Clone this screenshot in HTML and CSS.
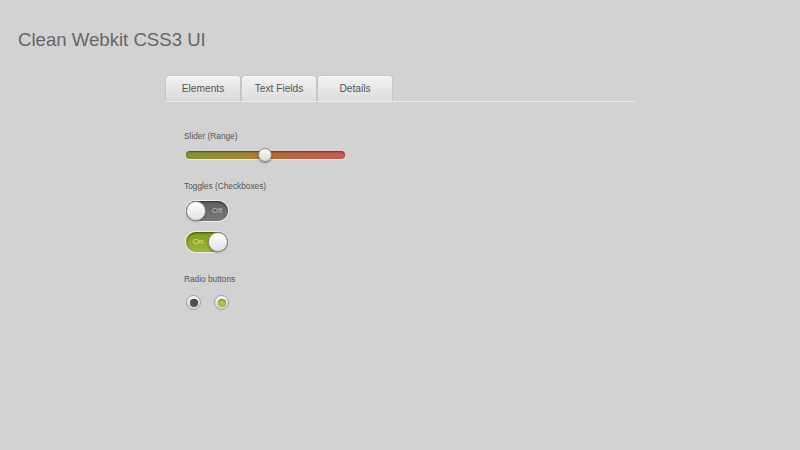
FILE: index.html
```html
<!DOCTYPE html>
<html>
<head>
<meta charset="utf-8">
<link rel="stylesheet" href="styles.css">
</head>
<body>
<h1 class="title">Clean Webkit CSS3 UI</h1>
<div class="panel">
  <div class="tabs">
    <div class="tab active">Elements</div>
    <div class="tab">Text Fields</div>
    <div class="tab">Details</div>
  </div>
  <div class="content">
    <div class="label">Slider (Range)</div>
    <div class="slider">
      <div class="track"></div>
      <div class="thumb"></div>
    </div>
    <div class="label l2">Toggles (Checkboxes)</div>
    <div class="toggle off"><span class="knob"></span><span class="txt">Off</span></div>
    <div class="toggle on"><span class="txt">On</span><span class="knob"></span></div>
    <div class="label l3">Radio buttons</div>
    <div class="radios">
      <span class="radio dark"></span>
      <span class="radio green"></span>
    </div>
  </div>
</div>
</body>
</html>
```
FILE: styles.css
```css
html, body { margin: 0; padding: 0; }
body {
  background: #d2d2d2;
  font-family: "Liberation Sans", Arial, sans-serif;
  width: 800px; height: 450px; overflow: hidden;
}
.title {
  margin: 0;
  padding: 29px 0 0 18px;
  font-size: 18.6px;
  font-weight: normal;
  color: #666;
  line-height: 22px;
}
.panel {
  margin: 24px 0 0 165px;
  width: 470px;
}
.tabs {
  display: flex;
  height: 26px;
  border-bottom: 1px solid #e9e9e9;
}
.tab {
  width: 74px;
  height: 25px;
  border: 1px solid #c6c6c6;
  border-bottom: none;
  border-radius: 4px 4px 0 0;
  background: linear-gradient(#f2f2f2, #dddddd);
  color: #555;
  font-size: 10.2px;
  text-align: center;
  line-height: 25px;
  box-shadow: inset 0 1px 0 #fafafa;
}
.tab.active {
  background: linear-gradient(#f3f3f3, #d9d9d9);
}
.content {
  padding: 28px 0 0 19px;
}
.label {
  font-size: 8.3px;
  color: #555;
  line-height: 12px;
}
.slider {
  position: relative;
  width: 159px;
  height: 16px;
  margin: 5px 0 0 2px;
}
.track {
  position: absolute;
  left: 0; right: 0; top: 4px;
  height: 8px;
  border-radius: 5px;
  background: linear-gradient(90deg, #849830 0%, #a08a30 35%, #b46a38 55%, #d05a50 100%);
  box-shadow: inset 0 1px 2px rgba(0,0,0,0.5), 0 1px 0 rgba(255,255,255,0.5);
}
.thumb {
  position: absolute;
  left: 72px; top: 1px;
  width: 14px; height: 14px;
  border-radius: 50%;
  background: linear-gradient(#fafafa, #d8d8d8);
  border: 1px solid #8a8a8a;
  box-sizing: border-box;
  box-shadow: 0 1px 2px rgba(0,0,0,0.4);
}
.l2 { margin-top: 17px; }
.toggle {
  display: flex;
  align-items: center;
  width: 42px;
  height: 20px;
  border-radius: 10px;
  box-sizing: border-box;
  margin-left: 2px;
  font-size: 8px;
  box-shadow: 0 0 0 1px rgba(255,255,255,0.6), inset 0 1px 2px rgba(0,0,0,0.5);
}
.toggle.off {
  margin-top: 9px;
  background: linear-gradient(#5f5f5f, #7a7a7a);
  color: #bbb;
}
.toggle.on {
  margin-top: 11px;
  background: linear-gradient(#7c9c1c, #9ab83a);
  color: #d8e6a8;
}
.knob {
  width: 20px; height: 20px;
  border-radius: 50%;
  box-sizing: border-box;
  background: linear-gradient(#ffffff, #e2e2e2);
  border: 1px solid #8a8a8a;
  box-shadow: 0 1px 2px rgba(0,0,0,0.35);
  flex: none;
}
.toggle .txt { flex: 1; text-align: center; line-height: 20px; }
.toggle.on .txt { padding-left: 2px; }
.l3 { margin-top: 21px; }
.radios {
  display: flex;
  gap: 13px;
  margin: 10px 0 0 2px;
}
.radio {
  width: 15px; height: 15px;
  border-radius: 50%;
  box-sizing: border-box;
  background: linear-gradient(#f4f4f4, #d0d0d0);
  border: 1px solid #a0a0a0;
  display: flex; align-items: center; justify-content: center;
}
.radio::after {
  content: "";
  width: 8px; height: 8px;
  border-radius: 50%;
}
.radio.dark::after { background: radial-gradient(#4a4a4a, #5e5e5e); box-shadow: inset 0 1px 1px rgba(0,0,0,0.5); }
.radio.green::after { background: radial-gradient(#b6d04a, #8fb028); box-shadow: inset 0 1px 1px rgba(0,0,0,0.3); }
```
